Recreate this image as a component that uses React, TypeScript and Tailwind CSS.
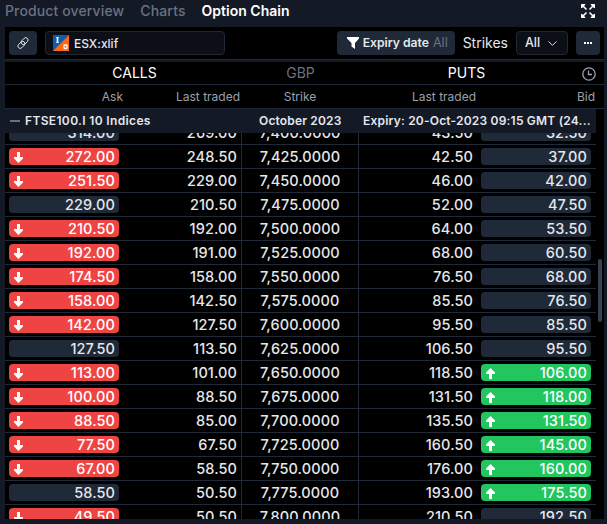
import { ChevronDown } from 'lucide-react';

type Trend = 'up' | 'down' | null;

interface OptionRow {
  ask: string;
  callLast: string;
  strike: string;
  putLast: string;
  bid: string;
  askTrend: Trend;
  bidTrend: Trend;
}

const row = (
  ask: string,
  callLast: string,
  strike: string,
  putLast: string,
  bid: string,
  askTrend: Trend = null,
  bidTrend: Trend = null,
): OptionRow => ({ ask, callLast, strike, putLast, bid, askTrend, bidTrend });

const rows: OptionRow[] = [
  row('314.00', '269.00', '7,400.0000', '43.50', '32.50'),
  row('272.00', '248.50', '7,425.0000', '42.50', '37.00', 'down'),
  row('251.50', '229.00', '7,450.0000', '46.00', '42.00', 'down'),
  row('229.00', '210.50', '7,475.0000', '52.00', '47.50'),
  row('210.50', '192.00', '7,500.0000', '64.00', '53.50', 'down'),
  row('192.00', '191.00', '7,525.0000', '68.00', '60.50', 'down'),
  row('174.50', '158.00', '7,550.0000', '76.50', '68.00', 'down'),
  row('158.00', '142.50', '7,575.0000', '85.50', '76.50', 'down'),
  row('142.00', '127.50', '7,600.0000', '95.50', '85.50', 'down'),
  row('127.50', '113.50', '7,625.0000', '106.50', '95.50'),
  row('113.00', '101.00', '7,650.0000', '118.50', '106.00', 'down', 'up'),
  row('100.00', '88.50', '7,675.0000', '131.50', '118.00', 'down', 'up'),
  row('88.50', '85.00', '7,700.0000', '135.50', '131.50', 'down', 'up'),
  row('77.50', '67.50', '7,725.0000', '160.50', '145.00', 'down', 'up'),
  row('67.00', '58.50', '7,750.0000', '176.00', '160.00', 'down', 'up'),
  row('58.50', '50.50', '7,775.0000', '193.00', '175.50', null, 'up'),
  row('49.50', '50.50', '7,800.0000', '210.50', '192.50', 'down'),
];

const trendColor = {
  up: 'bg-[#22c55e] text-white',
  down: 'bg-[#ef4444] text-white',
};

function Price({ value, trend }: { value: string; trend: Trend }) {
  return (
    <div
      className={`flex h-[17px] w-[110px] shrink-0 items-center justify-between rounded pr-1 pl-[5px] ${
        trend ? trendColor[trend] : 'bg-[#1f2937]'
      }`}
    >
      {trend ? (
        <svg
          className={trend === 'down' ? 'mt-[2px] rotate-180' : 'mt-[2px]'}
          width="9"
          height="11"
          viewBox="0 0 9 11"
          fill="#fff"
        >
          <path d="M4.5 0L9 4.600V6H6v5H3V6H0V4.600z" />
        </svg>
      ) : (
        <span />
      )}
      <span>{value}</span>
    </div>
  );
}

function Toolbar() {
  return (
    <div className="flex h-8 shrink-0 items-center px-1 text-[12.5px] font-medium text-gray-200">
      <button className="flex h-6 w-7 items-center justify-center rounded bg-[#1f2937]">
        <svg width="12" height="12" viewBox="0 0 24 24" fill="none" stroke="currentColor" strokeWidth="2" strokeLinecap="round">
          <path d="M9 13.500a4.500 4.500 0 0 0 6.800.500l5-5a4.500 4.500 0 0 0-6.400-6.400l-5 5a4.500 4.500 0 0 0-.900 4.900" />
          <path d="M15 10.500a4.500 4.500 0 0 0-6.800-.500l-5 5a4.500 4.500 0 0 0 6.400 6.400l5-5a4.500 4.500 0 0 0 .900-4.900" />
        </svg>
      </button>
      <div className="ml-2 flex h-6 w-[180px] items-center rounded border border-[#1f2937] bg-[#0d0f17] pl-[7px]">
        <svg width="16" height="16" viewBox="0 0 16 16">
          <rect width="16" height="16" fill="#0f5ca8" />
          <path d="M16 0v16H0z" fill="#ff6813" />
          <path d="M4.500 2.500v5" stroke="#fff" strokeWidth="1.600" />
          <path d="M3 2.500h3M3 7.500h3" stroke="#fff" strokeWidth="0.700" />
          <rect x="11" y="10" width="3" height="3.500" rx="0.700" fill="none" stroke="#fff" strokeWidth="1.300" />
        </svg>
        <span className="ml-[5px] pt-px text-[12px]">ESX:xlif</span>
      </div>
      <button className="ml-auto flex h-6 w-[118px] items-center rounded bg-[#1f2937] pl-2.5">
        <svg width="12" height="12" viewBox="0 0 12 12" fill="#fff">
          <path d="M0 0h12v1.500L8 6v6l-3.500-2.500V6L0 1.500z" />
        </svg>
        <span className="ml-1 text-[12.200px] font-semibold whitespace-nowrap">Expiry date</span>
        <span className="ml-1 font-normal text-gray-500">All</span>
      </button>
      <span className="ml-2 text-sm font-normal">Strikes</span>
      <button className="ml-2 flex h-6 w-[52px] items-center justify-between rounded border border-[#1f2937] bg-[#0d0f17] pr-[7px] pl-2">
        All
        <ChevronDown size={15} strokeWidth={1.500} />
      </button>
      <button className="ml-2 flex h-6 w-6 items-center justify-center gap-px rounded bg-[#1f2937]">
        <span className="h-[2px] w-[2px] bg-white" />
        <span className="h-[2px] w-[2px] bg-white" />
        <span className="h-[2px] w-[2px] bg-white" />
      </button>
    </div>
  );
}

export default function App() {
  return (
    <div className="flex h-[524px] w-[607px] flex-col overflow-hidden bg-[#141926] pb-[5px] pl-[5px] font-['Inter',sans-serif]">
      {/* Tabs */}
      <div className="flex h-[27px] w-[596px] shrink-0 items-center pb-[6px] text-[14px] font-medium text-gray-500">
        <span className="tracking-[0.13px]">Product overview</span>
        <span className="ml-4 tracking-[0.13px]">Charts</span>
        <span className="ml-4 font-semibold text-white">Option Chain</span>
        <svg className="mr-[6px] ml-auto" width="14" height="14" viewBox="0 0 14 14" fill="#fff" stroke="#fff">
          <path d="M.5 4V.5H4zM10 .5h3.500V4zM13.500 10v3.500H10zM4 13.500H.5V10z" />
          <path d="M2 2l3.500 3.500M12 2L8.500 5.500M12 12L8.500 8.500M2 12l3.500-3.500" strokeWidth="1.500" />
        </svg>
      </div>

      <div className="flex min-h-0 w-[599px] flex-1 flex-col bg-black">
        <Toolbar />
        <div className="h-[3px] shrink-0 border-t border-[#1f2937] bg-[#141926]" />

        {/* Column headings */}
        <div className="flex h-[23px] shrink-0 items-center border-b border-[#1f2937] pb-px text-[14px] text-white">
          <span className="w-[259px] text-center">CALLS</span>
          <span className="w-[73px] text-center text-gray-500">GBP</span>
          <span className="w-[259px] text-center">PUTS</span>
          <svg
            className="mt-[2px] -ml-[14px]"
            width="14"
            height="14"
            viewBox="0 0 14 14"
            fill="none"
            stroke="#9ca3af"
            strokeWidth="1.300"
          >
            <circle cx="7" cy="7" r="6.200" />
            <path d="M6.500 3.500v4H10" />
          </svg>
        </div>
        <div className="flex h-6 shrink-0 items-center border-b border-[#1f2937] text-[12px] text-gray-400">
          <span className="w-[118px] text-right">Ask</span>
          <span className="w-[117px] text-right">Last traded</span>
          <span className="w-[120px] text-center">Strike</span>
          <span className="w-[116px] text-right">Last traded</span>
          <span className="w-[119px] text-right">Bid</span>
        </div>

        {/* Expiry group */}
        <div className="flex h-6 w-[591px] shrink-0 items-center bg-[#141926] text-[12px] font-semibold whitespace-nowrap text-gray-200">
          <span className="ml-[5px] h-[1.500px] w-2.5 bg-gray-500" />
          <span className="ml-[5px] w-[234px] tracking-[0.35px]">FTSE100.I 10 Indices</span>
          <span className="w-[104px] tracking-[0.17px]">October 2023</span>
          <span className="tracking-[0.2px]">Expiry: 20-Oct-2023 09:15 GMT (24...</span>
        </div>

        <div className="flex min-h-0 flex-1 overflow-hidden">
          <div className="-mt-3 w-[591px] shrink-0 text-[14.500px] font-medium tracking-[0.1px] text-gray-200">
            {rows.map((r) => (
              <div key={r.strike} className="flex h-6 items-center border-b border-[#1f2937] pl-1">
                <Price value={r.ask} trend={r.askTrend} />
                <div className="h-full w-[123px] border-r border-[#1f2937] pr-1 text-right leading-[23px]">{r.callLast}</div>
                <div className="h-full w-[117px] border-r border-[#1f2937] text-center leading-[23px]">{r.strike}</div>
                <div className="h-full w-[122px] pr-2 text-right leading-[23px]">{r.putLast}</div>
                <Price value={r.bid} trend={r.bidTrend} />
              </div>
            ))}
          </div>
          <div className="mt-[126px] ml-[2px] h-[63px] w-1 shrink-0 rounded-full bg-gray-700" />
        </div>
      </div>
    </div>
  );
}
